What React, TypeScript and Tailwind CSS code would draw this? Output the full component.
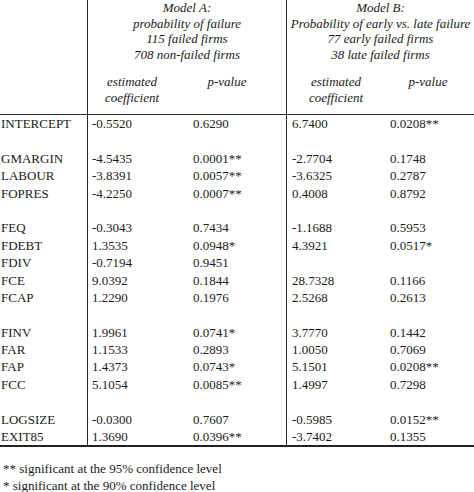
import React from "react";

type Row = [string, string, string, string, string] | null;

const rows: Row[] = [
  ["INTERCEPT", "-0.5520", "0.6290", "6.7400", "0.0208**"],
  null,
  ["GMARGIN", "-4.5435", "0.0001**", "-2.7704", "0.1748"],
  ["LABOUR", "-3.8391", "0.0057**", "-3.6325", "0.2787"],
  ["FOPRES", "-4.2250", "0.0007**", "0.4008", "0.8792"],
  null,
  ["FEQ", "-0.3043", "0.7434", "-1.1688", "0.5953"],
  ["FDEBT", "1.3535", "0.0948*", "4.3921", "0.0517*"],
  ["FDIV", "-0.7194", "0.9451", "", ""],
  ["FCE", "9.0392", "0.1844", "28.7328", "0.1166"],
  ["FCAP", "1.2290", "0.1976", "2.5268", "0.2613"],
  null,
  ["FINV", "1.9961", "0.0741*", "3.7770", "0.1442"],
  ["FAR", "1.1533", "0.2893", "1.0050", "0.7069"],
  ["FAP", "1.4373", "0.0743*", "5.1501", "0.0208**"],
  ["FCC", "5.1054", "0.0085**", "1.4997", "0.7298"],
  null,
  ["LOGSIZE", "-0.0300", "0.7607", "-0.5985", "0.0152**"],
  ["EXIT85", "1.3690", "0.0396**", "-3.7402", "0.1355"],
];

export default function App() {
  return (
    <div
      className="w-[474px] h-[492px] overflow-hidden bg-white text-[#1a1a1a] text-[13px]"
      style={{ fontFamily: '"Liberation Serif", "Times New Roman", serif' }}
    >
      {/* header */}
      <div className="grid grid-cols-[87px_199px_188px] h-[115px] border-b border-[#2a2a2a]">
        <div />
        <div className="border-l border-[#2a2a2a] flex flex-col italic">
          <div className="flex flex-col items-center leading-[15.5px] whitespace-nowrap">
            <div>Model A:</div>
            <div>probability of failure</div>
            <div>115 failed firms</div>
            <div>708 non-failed firms</div>
          </div>
          <div className="grid grid-cols-[100px_98px] mt-[12px] leading-[16px]">
            <div className="flex flex-col items-center pr-[12px]">
              <div>estimated</div>
              <div>coefficient</div>
            </div>
            <div className="flex flex-col items-center pr-[20px]">
              <div>p-value</div>
            </div>
          </div>
        </div>
        <div className="border-l border-[#2a2a2a] flex flex-col italic">
          <div className="flex flex-col items-center leading-[15.5px] whitespace-nowrap">
            <div>Model B:</div>
            <div>Probability of early vs. late failure</div>
            <div>77 early failed firms</div>
            <div>38 late failed firms</div>
          </div>
          <div className="grid grid-cols-[98px_89px] mt-[12px] leading-[16px]">
            <div className="flex flex-col items-center">
              <div>estimated</div>
              <div>coefficient</div>
            </div>
            <div className="flex flex-col items-center pr-[3px]">
              <div>p-value</div>
            </div>
          </div>
        </div>
      </div>

      {/* body */}
      <div className="border-b-2 border-[#222]">
        {rows.map((r, i) => (
          <div
            key={i}
            className="grid grid-cols-[87px_101px_98px_99px_89px] h-[17.4px] leading-[17.4px] whitespace-nowrap"
          >
            <div className="pl-[1px]">{r ? r[0] : ""}</div>
            <div className="border-l border-[#2a2a2a] pl-[4px]">{r ? r[1] : ""}</div>
            <div className="pl-[5px]">{r ? r[2] : ""}</div>
            <div className="border-l border-[#2a2a2a] pl-[5px]">{r ? r[3] : ""}</div>
            <div className="pl-[5px]">{r ? r[4] : ""}</div>
          </div>
        ))}
      </div>

      {/* footnotes */}
      <div className="mt-[13px] pl-[3px] leading-[17px] whitespace-nowrap">
        <div>** significant at the 95% confidence level</div>
        <div>* significant at the 90% confidence level</div>
      </div>
    </div>
  );
}
